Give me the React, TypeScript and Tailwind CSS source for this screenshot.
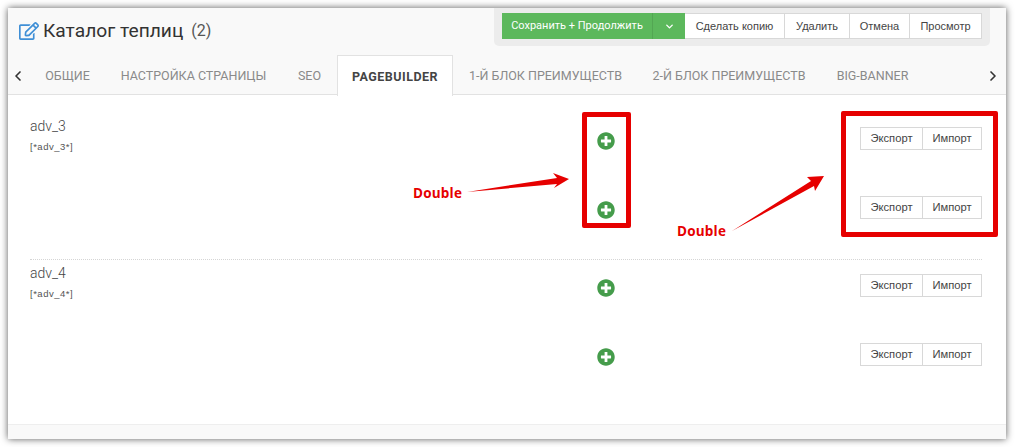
import { FaRegEdit, FaPlusCircle } from "react-icons/fa";
import { ChevronDown, ChevronLeft, ChevronRight } from "lucide-react";

const tabs = [
  { label: "Общие", width: "w-[75px]" },
  { label: "Настройка страницы", width: "w-[177px]" },
  { label: "SEO", width: "w-[55px]" },
  { label: "Pagebuilder", width: "w-[116px]", active: true },
  { label: "1-й блок преимуществ", width: "w-[185px]" },
  { label: "2-й блок преимуществ", width: "w-[182px]" },
  { label: "Big-banner", width: "w-[105px]" },
];

const toolbarButtons = [
  { label: "Сделать копию", width: "w-[100px]" },
  { label: "Удалить", width: "w-[65px]" },
  { label: "Отмена", width: "w-[60px]" },
  { label: "Просмотр", width: "w-[71px]" },
];

// one line of the table: plus button in the middle, export/import on the right
const ActionLine = ({ className }: { className: string }) => (
  <div className={className}>
    <div className="flex h-[23px] items-center">
      <FaPlusCircle className="relative top-[2px] ml-[567px] text-[18px] text-[#459c4b]" />
      <div className="ml-auto flex h-[23px] border border-[#d8d8d8] bg-white font-['Liberation_Sans',sans-serif] text-[11.2px] text-[#444]">
        <span className="flex w-[62px] items-center justify-center border-r border-[#d8d8d8]">Экспорт</span>
        <span className="flex w-[58px] items-center justify-center">Импорт</span>
      </div>
    </div>
  </div>
);

const Row = ({ name, first, className }: { name: string; first?: boolean; className: string }) => (
  <div className={`relative ${className}`}>
    <div className="absolute left-0 top-0">
      <div className={`${first ? "mt-[22px]" : "mt-[4px]"} text-[14px] font-light leading-[18px] text-[#444]`}>{name}</div>
      <div className="mt-[6px] font-['Liberation_Sans',sans-serif] text-[9.5px] leading-[12px] tracking-[0.5px] text-[#555]">
        [*{name}*]
      </div>
    </div>
    <ActionLine className={first ? "pt-[32px]" : "pt-[14px]"} />
    <ActionLine className="pt-[46px]" />
  </div>
);

export default function App() {
  return (
    <div className="h-[447px] w-[1015px] overflow-hidden bg-white p-2 pr-[9px] font-['Roboto',sans-serif]">
      <div className="relative flex h-[431px] flex-col bg-white shadow-[0_0_7px_rgba(0,0,0,0.65)]">
        {/* Header */}
        <div className="h-[87px] shrink-0 border-b border-[#e2e2e2] bg-[#f9f9f9]">
          <div className="flex h-[47px] items-start justify-between">
            <div className="flex items-center pl-[11px] pt-[10px]">
              <FaRegEdit className="text-[20px] text-[#3f8fd6]" />
              <h1 className="ml-[4px] text-[19.2px] leading-[26px] text-[#333]">Каталог теплиц</h1>
              <span className="ml-[8px] text-[16px] leading-[26px] text-[#555]">(2)</span>
            </div>
            <div className="mr-4 flex h-[38px] w-[496px] items-start rounded-b-[5px] bg-[#ececec] pl-2 pt-[5px]">
              <div className="flex h-[26px] w-[183px] bg-[#5cb85c] text-[11px] text-white">
                <span className="flex w-[151px] items-center justify-center border-r border-[#53a653]">
                  Сохранить + Продолжить
                </span>
                <span className="flex flex-1 items-center justify-center">
                  <ChevronDown size={11} strokeWidth={3} />
                </span>
              </div>
              <div className="flex h-[26px] border border-l-0 border-[#d8d8d8] bg-white font-['Liberation_Sans',sans-serif] text-[11px] text-[#444]">
                {toolbarButtons.map((b, i) => (
                  <span
                    key={b.label}
                    className={`flex items-center justify-center ${b.width} ${i < 3 ? "border-r border-[#d8d8d8]" : ""}`}
                  >
                    {b.label}
                  </span>
                ))}
              </div>
            </div>
          </div>
          <div className="flex h-[40px] items-stretch">
            <div className="flex w-[22px] items-center justify-start pl-[2px] pt-[2px] text-[#333]">
              <ChevronLeft size={16} strokeWidth={2.5} />
            </div>
            {tabs.map((t) => (
              <div
                key={t.label}
                className={`flex items-center justify-center pt-[2px] text-[12.5px] uppercase ${t.width} ${
                  t.active
                    ? "-mb-px border border-b-0 border-[#e2e2e2] bg-white font-bold tracking-[0.5px] text-[#444]"
                    : "text-[#8a8a8a]"
                }`}
              >
                {t.label}
              </div>
            ))}
            <div className="flex flex-1 items-center justify-end pr-[5px] pt-[2px] text-[#333]">
              <ChevronRight size={16} strokeWidth={2.5} />
            </div>
          </div>
        </div>

        {/* Rows */}
        <div className="flex-1 pl-[22px] pr-[24px]">
          <Row name="adv_3" first className="h-[165px] border-b border-dotted border-[#d5d5d5]" />
          <Row name="adv_4" className="h-[164px]" />
        </div>

        {/* Footer */}
        <div className="h-[15px] shrink-0 border-t border-[#eeeeee] bg-[#f9f9f9]" />

        {/* Red annotations drawn on top of the screenshot */}
        <div className="absolute left-[574px] top-[104px] h-[116px] w-[49px] rounded-[2px] border-[5px] border-[#e60000]" />
        <div className="absolute left-[833px] top-[103px] h-[126px] w-[157px] rounded-[2px] border-[5px] border-[#e60000]" />
        <span className="absolute left-[405px] top-[175px] font-['Open_Sans',sans-serif] text-[13.5px] font-bold leading-[20px] tracking-[0.2px] text-[#e60000]">
          Double
        </span>
        <span className="absolute left-[669px] top-[213px] font-['Open_Sans',sans-serif] text-[13.5px] font-bold leading-[20px] tracking-[0.2px] text-[#e60000]">
          Double
        </span>
        <svg className="absolute left-0 top-0" width="1000" height="431" viewBox="0 0 1000 431" fill="#e60000">
          <path d="M459 184 L549 170 L545 165 L561 171 L546 180 L549 176 Z" />
          <path d="M724 223 L803 173 L799 169 L816 168 L807 183 L806 178 Z" />
        </svg>
      </div>
    </div>
  );
}
